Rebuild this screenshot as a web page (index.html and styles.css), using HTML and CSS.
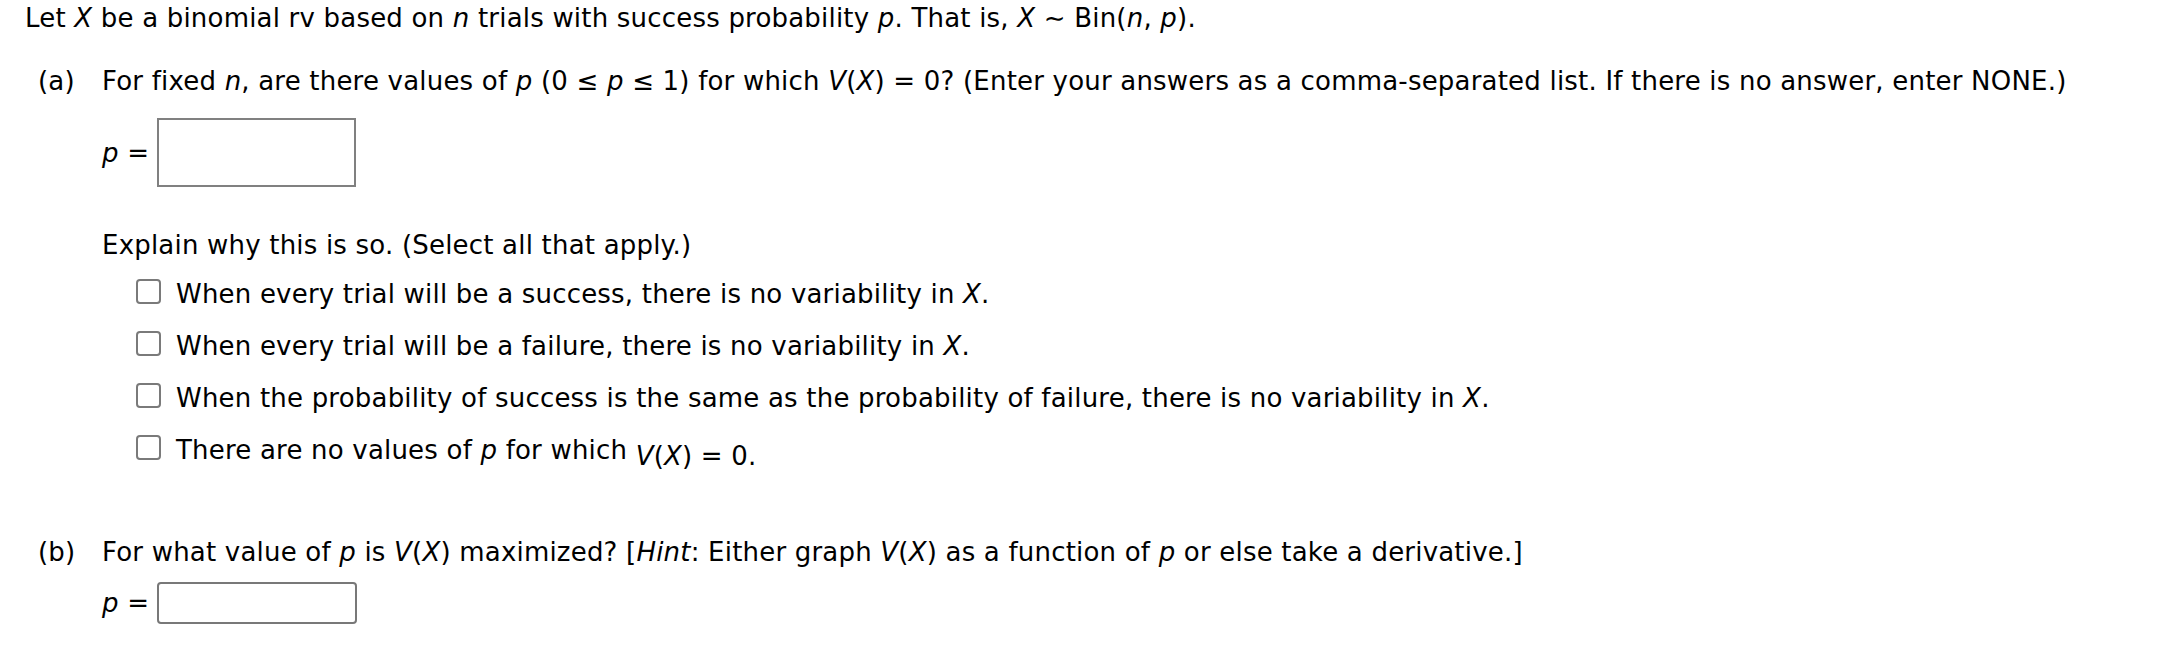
FILE: index.html
```html
<!DOCTYPE html>
<html lang="en">
<head>
<meta charset="utf-8">
<title>Binomial variance</title>
<link rel="stylesheet" href="styles.css">
</head>
<body>
<div class="page">
  <p class="intro">Let <i>X</i> be a binomial rv based on <i>n</i> trials with success probability <i>p</i>. That is, <i>X</i> <span class="tilde">&#8764;</span> Bin(<i>n</i>, <i>p</i>).</p>

  <div class="part part-a">
    <span class="label">(a)</span>
    <div class="body">
      <p class="question">For fixed <i>n</i>, are there values of <i>p</i> (0 &le; <i>p</i> &le; 1) for which <i>V</i>(<i>X</i>) = 0? (Enter your answers as a comma-separated list. If there is no answer, enter NONE.)</p>
      <div class="answer answer-a">
        <span class="var"><i>p</i> =</span>
        <span class="box box-a"></span>
      </div>
      <p class="explain">Explain why this is so. (Select all that apply.)</p>
      <ul class="choices">
        <li class="choice"><span class="check"></span><span class="choice-text">When every trial will be a success, there is no variability in <i>X</i>.</span></li>
        <li class="choice"><span class="check"></span><span class="choice-text">When every trial will be a failure, there is no variability in <i>X</i>.</span></li>
        <li class="choice"><span class="check"></span><span class="choice-text">When the probability of success is the same as the probability of failure, there is no variability in <i>X</i>.</span></li>
        <li class="choice"><span class="check"></span><span class="choice-text">There are no values of <i>p</i> for which <span class="math"><i>V</i>(<i>X</i>) = 0.</span></span></li>
      </ul>
    </div>
  </div>

  <div class="part part-b">
    <span class="label">(b)</span>
    <div class="body">
      <p class="question">For what value of <i>p</i> is <i>V</i>(<i>X</i>) maximized? [<i>Hint</i>: Either graph <i>V</i>(<i>X</i>) as a function of <i>p</i> or else take a derivative.]</p>
      <div class="answer answer-b">
        <span class="var"><i>p</i> =</span>
        <span class="box box-b"></span>
      </div>
    </div>
  </div>
</div>
</body>
</html>
```
FILE: styles.css
```css
html, body {
  margin: 0;
  padding: 0;
  background: #ffffff;
}

.page {
  font-family: "DejaVu Sans", Verdana, sans-serif;
  font-size: 26px;
  letter-spacing: 0.2px;
  line-height: 30px;
  color: #000000;
  padding: 3px 0 0 25px;
  white-space: nowrap;
}

p {
  margin: 0;
}

.part {
  display: grid;
  grid-template-columns: 64px auto;
  margin-left: 13px;
}

.part-a {
  margin-top: 33px;
}

.part-b {
  margin-top: 72px;
}

.answer {
  display: flex;
  align-items: center;
  gap: 8px;
}

.answer-a {
  margin-top: 22px;
}

.answer-b {
  margin-top: 15px;
}

.box {
  display: block;
  box-sizing: border-box;
  border: 2px solid #808080;
  background: #ffffff;
}

.box-a {
  width: 199px;
  height: 69px;
}

.box-b {
  width: 200px;
  height: 42px;
  border-color: #787878;
  border-radius: 4px;
}

.explain {
  margin-top: 43px;
}

.choices {
  list-style: none;
  margin: 19px 0 0 0;
  padding: 0 0 0 34px;
  display: flex;
  flex-direction: column;
  gap: 22px;
}

.choice {
  display: flex;
  align-items: flex-start;
  gap: 15px;
  height: 30px;
}

.check {
  flex: none;
  box-sizing: border-box;
  width: 25px;
  height: 25px;
  border: 2px solid #7a7a7a;
  border-radius: 4px;
  background: #ffffff;
}

.math {
  display: inline-block;
  vertical-align: -6px;
}
```
